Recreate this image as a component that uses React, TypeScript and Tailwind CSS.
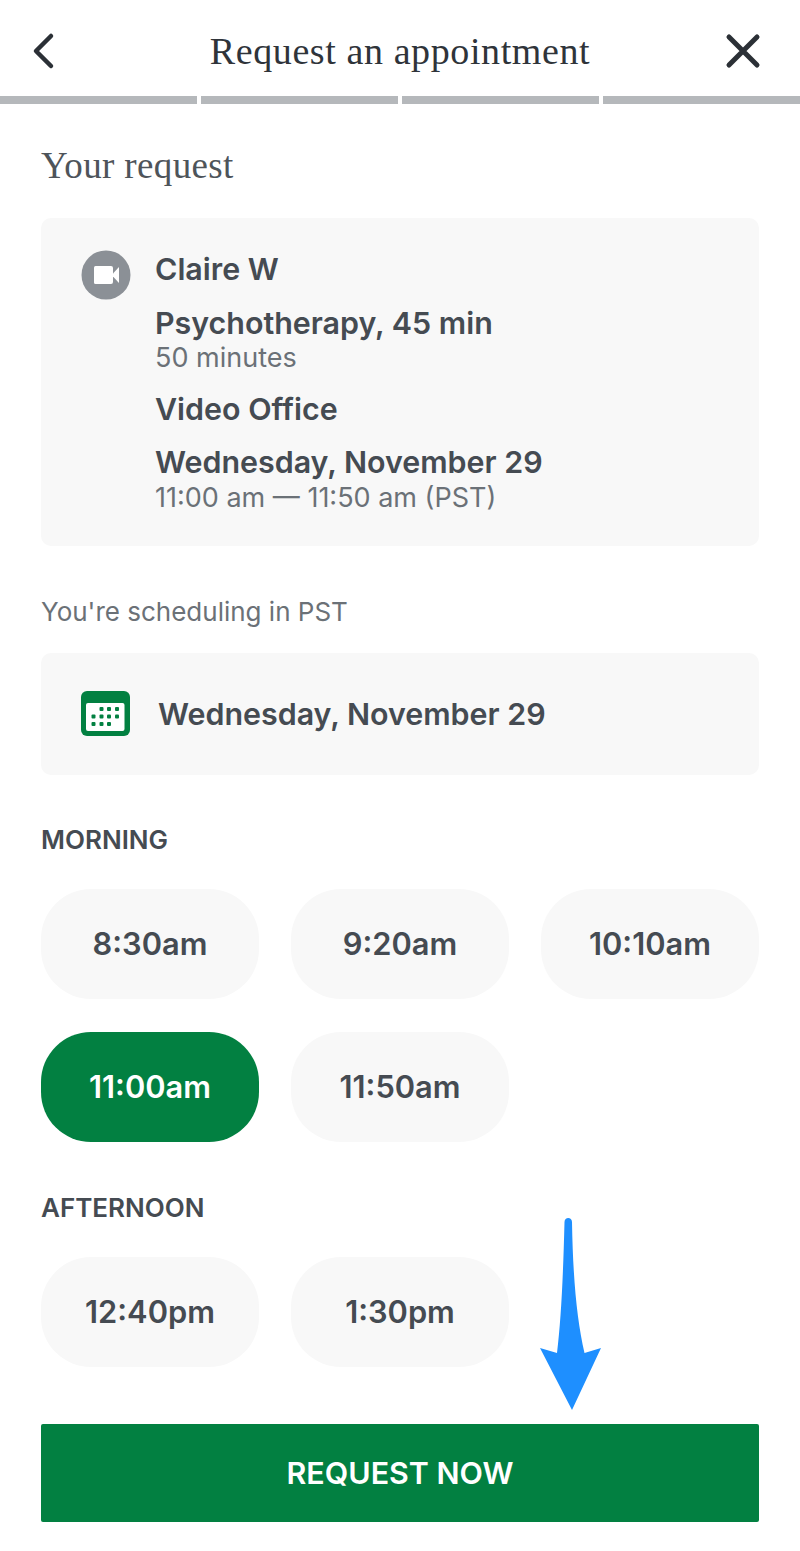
import React from 'react';

const SERIF = 'font-["Liberation_Serif",serif]';

const morning = ['8:30am', '9:20am', '10:10am', '11:00am', '11:50am'];
const afternoon = ['12:40pm', '1:30pm'];

function TimeSlot({ label, selected }: { label: string; selected?: boolean }) {
  return (
    <div
      className={
        selected
          ? 'h-[110px] rounded-[50px] bg-[#028041] text-white flex items-center justify-center text-[30.8px] font-semibold'
          : 'h-[110px] rounded-[50px] bg-[#f8f8f8] text-[#454b52] flex items-center justify-center text-[30.8px] font-semibold'
      }
    >
      {label}
    </div>
  );
}

function VideoIcon() {
  return (
    <svg width="50" height="50" viewBox="0 0 50 50" className="shrink-0">
      <circle cx="25" cy="25" r="24.5" fill="#8b9096" />
      <path d="M13 17.5a1.5 1.5 0 0 1 1.5-1.500h15.500a2 2 0 0 1 2 2v14a2 2 0 0 1-2 2H14.500a1.500 1.500 0 0 1-1.500-1.500z" fill="#fff" />
      <path d="M32 23.500 38 17v16l-6-6.500z" fill="#fff" />
    </svg>
  );
}

function CalendarIcon() {
  const dots = [
    [18.5, 16], [26, 16], [34, 16],
    [10.5, 23.5], [18.5, 23.5], [26, 23.5], [34, 23.5],
    [10.5, 31], [18.5, 31], [26, 31],
  ];
  return (
    <svg width="49" height="45" viewBox="0 0 49 45" className="shrink-0 -mt-[1px]">
      <rect width="49" height="45" rx="6" fill="#028041" />
      <rect x="5" y="12" width="38.500" height="28" rx="2" fill="#fff" />
      {dots.map(([x, y], i) => (
        <rect key={i} x={x} y={y} width="4" height="4" rx="1" fill="#028041" />
      ))}
    </svg>
  );
}

export default function App() {
  return (
    <div className='relative w-[800px] h-[1551px] bg-white overflow-hidden font-["Inter",sans-serif] text-[#454b52]'>
      {/* header */}
      <div className="h-[96px] flex items-center justify-between pl-[30px] pr-[39px] pt-[6px]">
        <div className="w-[45px]">
          <svg width="26" height="38" viewBox="0 0 26 38" fill="none" stroke="#2b3036" strokeWidth="4.5" strokeLinecap="round" strokeLinejoin="round">
            <path d="M21 4 6 19l15 15" />
          </svg>
        </div>
        <h1 className={`${SERIF} text-[38px] leading-none tracking-[0.6px] text-[#2f343a]`}>Request an appointment</h1>
        <svg width="36" height="36" viewBox="0 0 36 36" fill="none" stroke="#2b3036" strokeWidth="5" strokeLinecap="round">
          <path d="M4 4l28 28M32 4 4 32" />
        </svg>
      </div>
      <div className="grid grid-cols-4 gap-[4px] h-[8px]">
        <div className="bg-[#b5b8bb]" />
        <div className="bg-[#b5b8bb]" />
        <div className="bg-[#b5b8bb]" />
        <div className="bg-[#b5b8bb]" />
      </div>

      <div className="px-[41px]">
        <h2 className={`${SERIF} text-[37px] leading-[44px] tracking-[0.35px] text-[#4e545a] mt-[40px]`}>Your request</h2>

        {/* summary card */}
        <div className="mt-[30px] h-[328px] rounded-[10px] bg-[#f8f8f8] flex pl-[40px] pt-[32px] gap-[24px]">
          <VideoIcon />
          <div className="flex flex-col">
            <p className="text-[30.4px] leading-[38px] font-semibold">Claire W</p>
            <p className="mt-[16px] text-[30.4px] leading-[38px] font-semibold">Psychotherapy, 45 min</p>
            <p className="text-[27px] leading-[32px] text-[#6b7177]">50 minutes</p>
            <p className="mt-[16px] text-[30.4px] leading-[38px] font-semibold">Video Office</p>
            <p className="mt-[15px] text-[30.4px] leading-[38px] font-semibold">Wednesday, November 29</p>
            <p className="mt-[1px] text-[27px] leading-[32px] text-[#6b7177]">11:00 am — 11:50 am (PST)</p>
          </div>
        </div>

        <p className="mt-[50px] text-[26px] leading-[32px] text-[#6b7177]">You're scheduling in PST</p>

        {/* date picker */}
        <div className="mt-[25px] h-[122px] rounded-[10px] bg-[#f8f8f8] flex items-center pl-[40px] gap-[28px]">
          <CalendarIcon />
          <p className="pt-[2px] text-[30.4px] font-semibold">Wednesday, November 29</p>
        </div>

        <p className="mt-[49px] text-[26px] leading-[32px] font-semibold">MORNING</p>
        <div className="mt-[33px] grid grid-cols-3 gap-x-[32px] gap-y-[33px]">
          {morning.map((t) => (
            <TimeSlot key={t} label={t} selected={t === '11:00am'} />
          ))}
        </div>

        <p className="mt-[50px] text-[26px] leading-[32px] font-semibold">AFTERNOON</p>
        <div className="mt-[33px] grid grid-cols-3 gap-x-[32px]">
          {afternoon.map((t) => (
            <TimeSlot key={t} label={t} />
          ))}
        </div>

        <div className="mt-[57px] h-[98px] pt-[2px] rounded-[2px] bg-[#028041] text-white flex items-center justify-center text-[30.4px] font-semibold">
          REQUEST NOW
        </div>
      </div>

      {/* annotation arrow */}
      <svg className="absolute left-[530px] top-[1210px]" width="80" height="205" viewBox="530 1210 80 205">
        <path
          d="M564.500 1222c0-5.500 7.500-5.500 7.500 0C573 1280 577 1320 584.500 1353L601 1348l-29 62-32-62 17 5C561 1320 563 1280 564.500 1222z"
          fill="#1e8fff"
        />
      </svg>
    </div>
  );
}
